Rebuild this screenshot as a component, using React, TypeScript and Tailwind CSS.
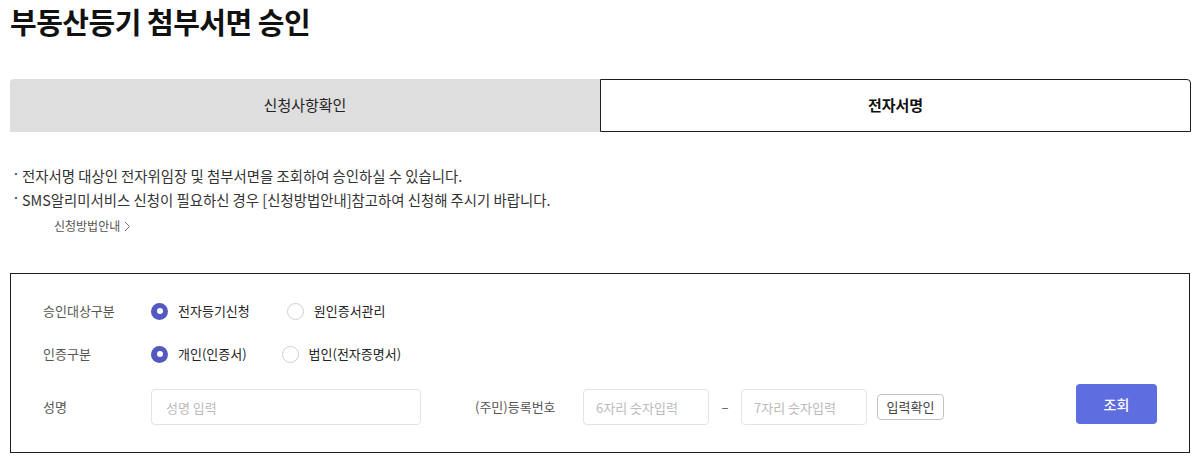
export default function App() {
  return (
    <div
      className="w-[1196px] h-[469px] bg-white px-[10px] text-[#222]"
      style={{ fontFamily: '"Noto Sans CJK KR", "Noto Sans", sans-serif' }}
    >
      <h1 className="pt-[1px] text-[29px] font-bold leading-[40px] tracking-[-0.5px] text-[#111]">
        부동산등기 첨부서면 승인
      </h1>

      {/* tabs */}
      <div className="mt-[38px] flex w-[1181px] h-[53px]">
        <div className="flex w-[590px] items-center justify-center rounded-tl-[4px] bg-[#dedede] text-[15px] text-[#222]">
          신청사항확인
        </div>
        <div className="flex flex-1 items-center justify-center rounded-tr-[4px] border border-[#1e1e1e] bg-white text-[15px] font-bold text-[#111]">
          전자서명
        </div>
      </div>

      {/* notice */}
      <ul className="mt-[32px] text-[14.4px] leading-[24px] text-[#333]">
        <li className="flex">
          <span className="w-[12px] pl-[2px] -mt-[3px]">·</span>
          전자서명 대상인 전자위임장 및 첨부서면을 조회하여 승인하실 수 있습니다.
        </li>
        <li className="flex">
          <span className="w-[12px] pl-[2px] -mt-[3px]">·</span>
          SMS알리미서비스 신청이 필요하신 경우 [신청방법안내]참고하여 신청해 주시기 바랍니다.
        </li>
      </ul>
      <div className="mt-[5px] flex items-center gap-[4px] pl-[44px] text-[12px] leading-[18px] text-[#555]">
        신청방법안내
        <svg width="7" height="11" viewBox="0 0 7 11" fill="none">
          <path d="M1 1l4.5 4.5L1 10" stroke="#777" strokeWidth="1" />
        </svg>
      </div>

      {/* search box */}
      <div className="mt-[38px] w-[1180px] border border-[#1e1e1e] px-[32px] pt-[25px] pb-[27px]">
        <div className="flex h-[24px] items-center">
          <div className="w-[108px] text-[13px] text-[#555]">승인대상구분</div>
          <Radio checked label="전자등기신청" />
          <div className="w-[37px]" />
          <Radio label="원인증서관리" />
        </div>
        <div className="mt-[19px] flex h-[24px] items-center">
          <div className="w-[108px] text-[13px] text-[#555]">인증구분</div>
          <Radio checked label="개인(인증서)" />
          <div className="w-[35px]" />
          <Radio label="법인(전자증명서)" />
        </div>
        <div className="mt-[23px] flex h-[36px] items-center">
          <div className="w-[108px] text-[13px] text-[#555]">성명</div>
          <input
            className="h-[36px] w-[270px] rounded-[4px] border border-[#e3e3e3] px-[14px] text-[13px] outline-none placeholder:text-[#bbb]"
            placeholder="성명 입력"
          />
          <div className="ml-[54px] w-[108px] text-[13px] text-[#555]">(주민)등록번호</div>
          <input
            className="h-[36px] w-[126px] rounded-[4px] border border-[#e3e3e3] px-[12px] text-[13px] outline-none placeholder:text-[#bbb]"
            placeholder="6자리 숫자입력"
          />
          <span className="w-[32px] text-center text-[13px] text-[#555]">–</span>
          <input
            className="h-[36px] w-[126px] rounded-[4px] border border-[#e3e3e3] px-[12px] text-[13px] outline-none placeholder:text-[#bbb]"
            placeholder="7자리 숫자입력"
          />
          <button className="ml-[10px] h-[26px] w-[67px] rounded-[4px] border border-[#c4c4c4] bg-white text-[13px] text-[#444]">
            입력확인
          </button>
          <button className="ml-auto mb-[6px] h-[40px] w-[81px] rounded-[4px] bg-[#5e6de0] text-[14px] font-medium text-white">
            조회
          </button>
        </div>
      </div>
    </div>
  );
}

function Radio({ checked, label }: { checked?: boolean; label: string }) {
  return (
    <label className="flex items-center gap-[10px] text-[13px] text-[#222]">
      {checked ? (
        <span className="flex h-[17px] w-[17px] items-center justify-center rounded-full bg-[#5459c2]">
          <span className="h-[6px] w-[6px] rounded-full bg-white" />
        </span>
      ) : (
        <span className="h-[17px] w-[17px] rounded-full border border-[#cfcfcf] bg-white" />
      )}
      {label}
    </label>
  );
}
